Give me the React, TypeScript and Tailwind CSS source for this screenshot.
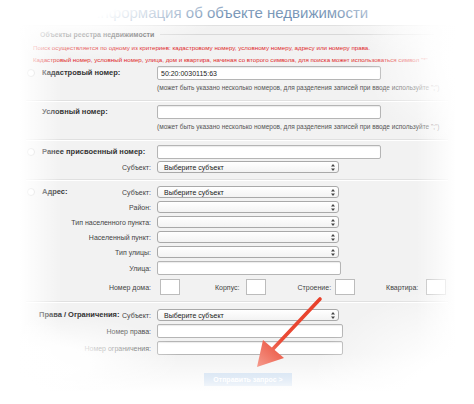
import type { ReactNode } from 'react';

const NOTE = '(может быть указано несколько номеров, для разделения записей при вводе используйте ";")';

function Radio() {
  return <span className="mr-[7px] h-[8px] w-[8px] shrink-0 rounded-full border border-[#c4c4c4] bg-white" />;
}

function Row({
  left,
  radio,
  label,
  children,
  className = '',
}: {
  left?: string;
  radio?: boolean;
  label?: string;
  children: ReactNode;
  className?: string;
}) {
  return (
    <div className={`flex items-center ${className}`}>
      <div className="flex w-[125px] shrink-0 items-center pl-[1px]">
        {radio ? <Radio /> : left ? <span className="w-[15px]" /> : null}
        {left && <span className="whitespace-nowrap text-[7.5px] font-bold text-[#333]">{left}</span>}
        {label && <span className="ml-auto whitespace-nowrap text-[#444]">{label}</span>}
      </div>
      <div className="ml-[6px] flex items-center">{children}</div>
    </div>
  );
}

function Input({ w = 'w-[224px]', value = '' }: { w?: string; value?: string }) {
  return (
    <div className={`flex h-[14px] ${w} items-center rounded-[2px] border border-[#b5b5b5] bg-white px-[3px] text-[7px] text-[#222] shadow-[inset_0_1px_1px_rgba(0,0,0,0.08)]`}>
      {value}
    </div>
  );
}

function Select({ text = '' }: { text?: string }) {
  return (
    <div className="flex h-[12px] w-[182px] items-center justify-between rounded-[3px] border border-[#a9a9a9] bg-gradient-to-b from-white to-[#f3f3f3] pl-[6px] pr-[3px] text-[7px] text-[#222]">
      <span>{text}</span>
      <svg width="4" height="7" viewBox="0 0 4 7">
        <path d="M2 0 L4 2.6 H0 Z M2 7 L4 4.4 H0 Z" fill="#444" />
      </svg>
    </div>
  );
}

function Box() {
  return <div className="h-[16px] w-[20px] border border-[#bcbcbc] bg-white" />;
}

export default function App() {
  return (
    <div
      className="relative h-[404px] w-[474px] overflow-hidden bg-[#f2f2f2] text-[7px] leading-none"
      style={{ fontFamily: '"Liberation Sans", Arial, sans-serif' }}
    >
      {/* title */}
      <div className="flex h-[26px] items-center justify-center border-b border-[#dedede] bg-white pr-[16px] text-[15px] text-[#4b73a0]">
        Информация об объекте недвижимости
      </div>

      {/* fieldset head */}
      <div className="flex h-[16px] items-center pl-[40px] pr-[40px]">
        <span className="whitespace-nowrap font-bold text-[7px] text-[#555]">Объекты реестра недвижимости</span>
        <span className="ml-[6px] h-px flex-1 bg-[#d8d8d8]" />
      </div>

      <div className="pl-[33px] text-[6.2px] text-[#e02a2a]">
        <div className="flex h-[13px] items-center whitespace-nowrap">
          Поиск осуществляется по одному из критериев: кадастровому номеру, условному номеру, адресу или номеру права.
        </div>
        <div className="flex h-[11px] items-center whitespace-nowrap">
          Кадастровый номер, условный номер, улица, дом и квартира, начиная со второго символа, для поиска может использоваться символ "*"
        </div>
      </div>

      {/* кадастровый */}
      <div className="mx-[26px] border-b border-[#e0e0e0] pb-[4px] shadow-[0_1px_0_#fff]">
        <Row radio left="Кадастровый номер:">
          <Input value="50:20:0030115:63" />
        </Row>
        <div className="flex h-[16px] items-center whitespace-nowrap pl-[131px] text-[6.5px] text-[#555]">{NOTE}</div>
      </div>

      {/* условный */}
      <div className="mx-[26px] border-b border-[#e0e0e0] pt-[4px] pb-[4px] shadow-[0_1px_0_#fff]">
        <Row left="Условный номер:">
          <Input />
        </Row>
        <div className="flex h-[16px] items-center whitespace-nowrap pl-[131px] text-[6.5px] text-[#555]">{NOTE}</div>
      </div>

      {/* ранее присвоенный */}
      <div className="mx-[26px] border-b border-[#e0e0e0] pt-[5px] pb-[6px] shadow-[0_1px_0_#fff]">
        <Row radio left="Ранее присвоенный номер:">
          <Input />
        </Row>
        <Row label="Субъект:" className="mt-[2px]">
          <Select text="Выберите субъект" />
        </Row>
      </div>

      {/* адрес */}
      <div className="mx-[26px] border-b border-[#e0e0e0] pt-[6px] pb-[6px] shadow-[0_1px_0_#fff]">
        <Row radio left="Адрес:" label="Субъект:">
          <Select text="Выберите субъект" />
        </Row>
        <Row label="Район:" className="mt-[3px]">
          <Select />
        </Row>
        <Row label="Тип населенного пункта:" className="mt-[3px]">
          <Select />
        </Row>
        <Row label="Населенный пункт:" className="mt-[3px]">
          <Select />
        </Row>
        <Row label="Тип улицы:" className="mt-[3px]">
          <Select />
        </Row>
        <Row label="Улица:" className="mt-[3px]">
          <Input w="w-[184px]" />
        </Row>
        <div className="mt-[4px] flex items-center">
          <div className="flex w-[125px] justify-end text-[#444]">Номер дома:</div>
          <div className="ml-[9px]">
            <Box />
          </div>
          <span className="ml-[35px] text-[#444]">Корпус:</span>
          <div className="ml-[6px]">
            <Box />
          </div>
          <span className="ml-[32px] text-[#444]">Строение:</span>
          <div className="ml-[4px]">
            <Box />
          </div>
          <span className="ml-[31px] text-[#444]">Квартира:</span>
          <div className="ml-[8px]">
            <Box />
          </div>
        </div>
      </div>

      {/* права */}
      <div className="mx-[26px] pt-[7px]">
        <div className="flex items-center">
          <div className="flex w-[125px] items-center pl-[13px]">
            <span className="whitespace-nowrap text-[7.5px] font-bold text-[#333]">Права / Ограничения:</span>
            <span className="ml-auto text-[#444]">Субъект:</span>
          </div>
          <div className="ml-[6px]">
            <Select text="Выберите субъект" />
          </div>
        </div>
        <Row label="Номер права:" className="mt-[3px]">
          <Input w="w-[186px]" />
        </Row>
        <Row label="Номер ограничения:" className="mt-[3px]">
          <Input w="w-[186px]" />
        </Row>
      </div>

      <div className="mt-[18px] flex justify-center pl-[22px]">
        <div className="flex h-[13px] w-[88px] items-center justify-center bg-gradient-to-b from-[#b6cfea] to-[#9dbde0] text-[7px] font-bold text-white">
          Отправить запрос &gt;
        </div>
      </div>

      {/* vignette */}
      <div className="pointer-events-none absolute inset-0 bg-[linear-gradient(to_right,#fff_0px,#fff_20px,rgba(255,255,255,0)_62px)]" />
      <div className="pointer-events-none absolute inset-0 bg-[linear-gradient(to_left,#fff_0px,#fff_18px,rgba(255,255,255,0)_58px)]" />
      <div className="pointer-events-none absolute inset-0 bg-[linear-gradient(to_bottom,rgba(255,255,255,0.5)_0px,rgba(255,255,255,0)_30px)]" />
      <div className="pointer-events-none absolute inset-0 bg-[linear-gradient(to_top,#fff_0px,#fff_12px,rgba(255,255,255,0.55)_30px,rgba(255,255,255,0)_50px)]" />
      <div className="pointer-events-none absolute inset-0 bg-[radial-gradient(ellipse_120px_90px_at_0px_404px,#fff_35%,rgba(255,255,255,0)_100%)]" />
      <div className="pointer-events-none absolute inset-0 bg-[radial-gradient(ellipse_130px_45px_at_50px_360px,rgba(255,255,255,0.9)_30%,rgba(255,255,255,0)_100%)]" />
      <div className="pointer-events-none absolute inset-0 bg-[radial-gradient(ellipse_170px_120px_at_474px_404px,#fff_40%,rgba(255,255,255,0)_100%)]" />
      <div className="pointer-events-none absolute inset-0 bg-[radial-gradient(ellipse_170px_60px_at_60px_0px,#fff_35%,rgba(255,255,255,0)_100%)]" />
      <div className="pointer-events-none absolute inset-0 bg-[radial-gradient(ellipse_150px_70px_at_474px_0px,#fff_25%,rgba(255,255,255,0)_100%)]" />
      <div className="pointer-events-none absolute inset-0 bg-[radial-gradient(ellipse_110px_90px_at_474px_60px,#fff_20%,rgba(255,255,255,0)_100%)]" />

      {/* arrow */}
      <svg className="pointer-events-none absolute left-0 top-0" width="474" height="404" viewBox="0 0 474 404">
        <defs>
          <linearGradient id="arr" x1="320" y1="299" x2="258" y2="367" gradientUnits="userSpaceOnUse">
            <stop offset="0" stopColor="#e8402a" />
            <stop offset="0.6" stopColor="#ea4a35" />
            <stop offset="1" stopColor="#f59a8c" />
          </linearGradient>
        </defs>
        <path d="M320 299 L272 350" stroke="url(#arr)" strokeWidth="3.6" strokeLinecap="round" />
        <path d="M257 367 L263 340 L284 358 Z" fill="url(#arr)" />
      </svg>
    </div>
  );
}
